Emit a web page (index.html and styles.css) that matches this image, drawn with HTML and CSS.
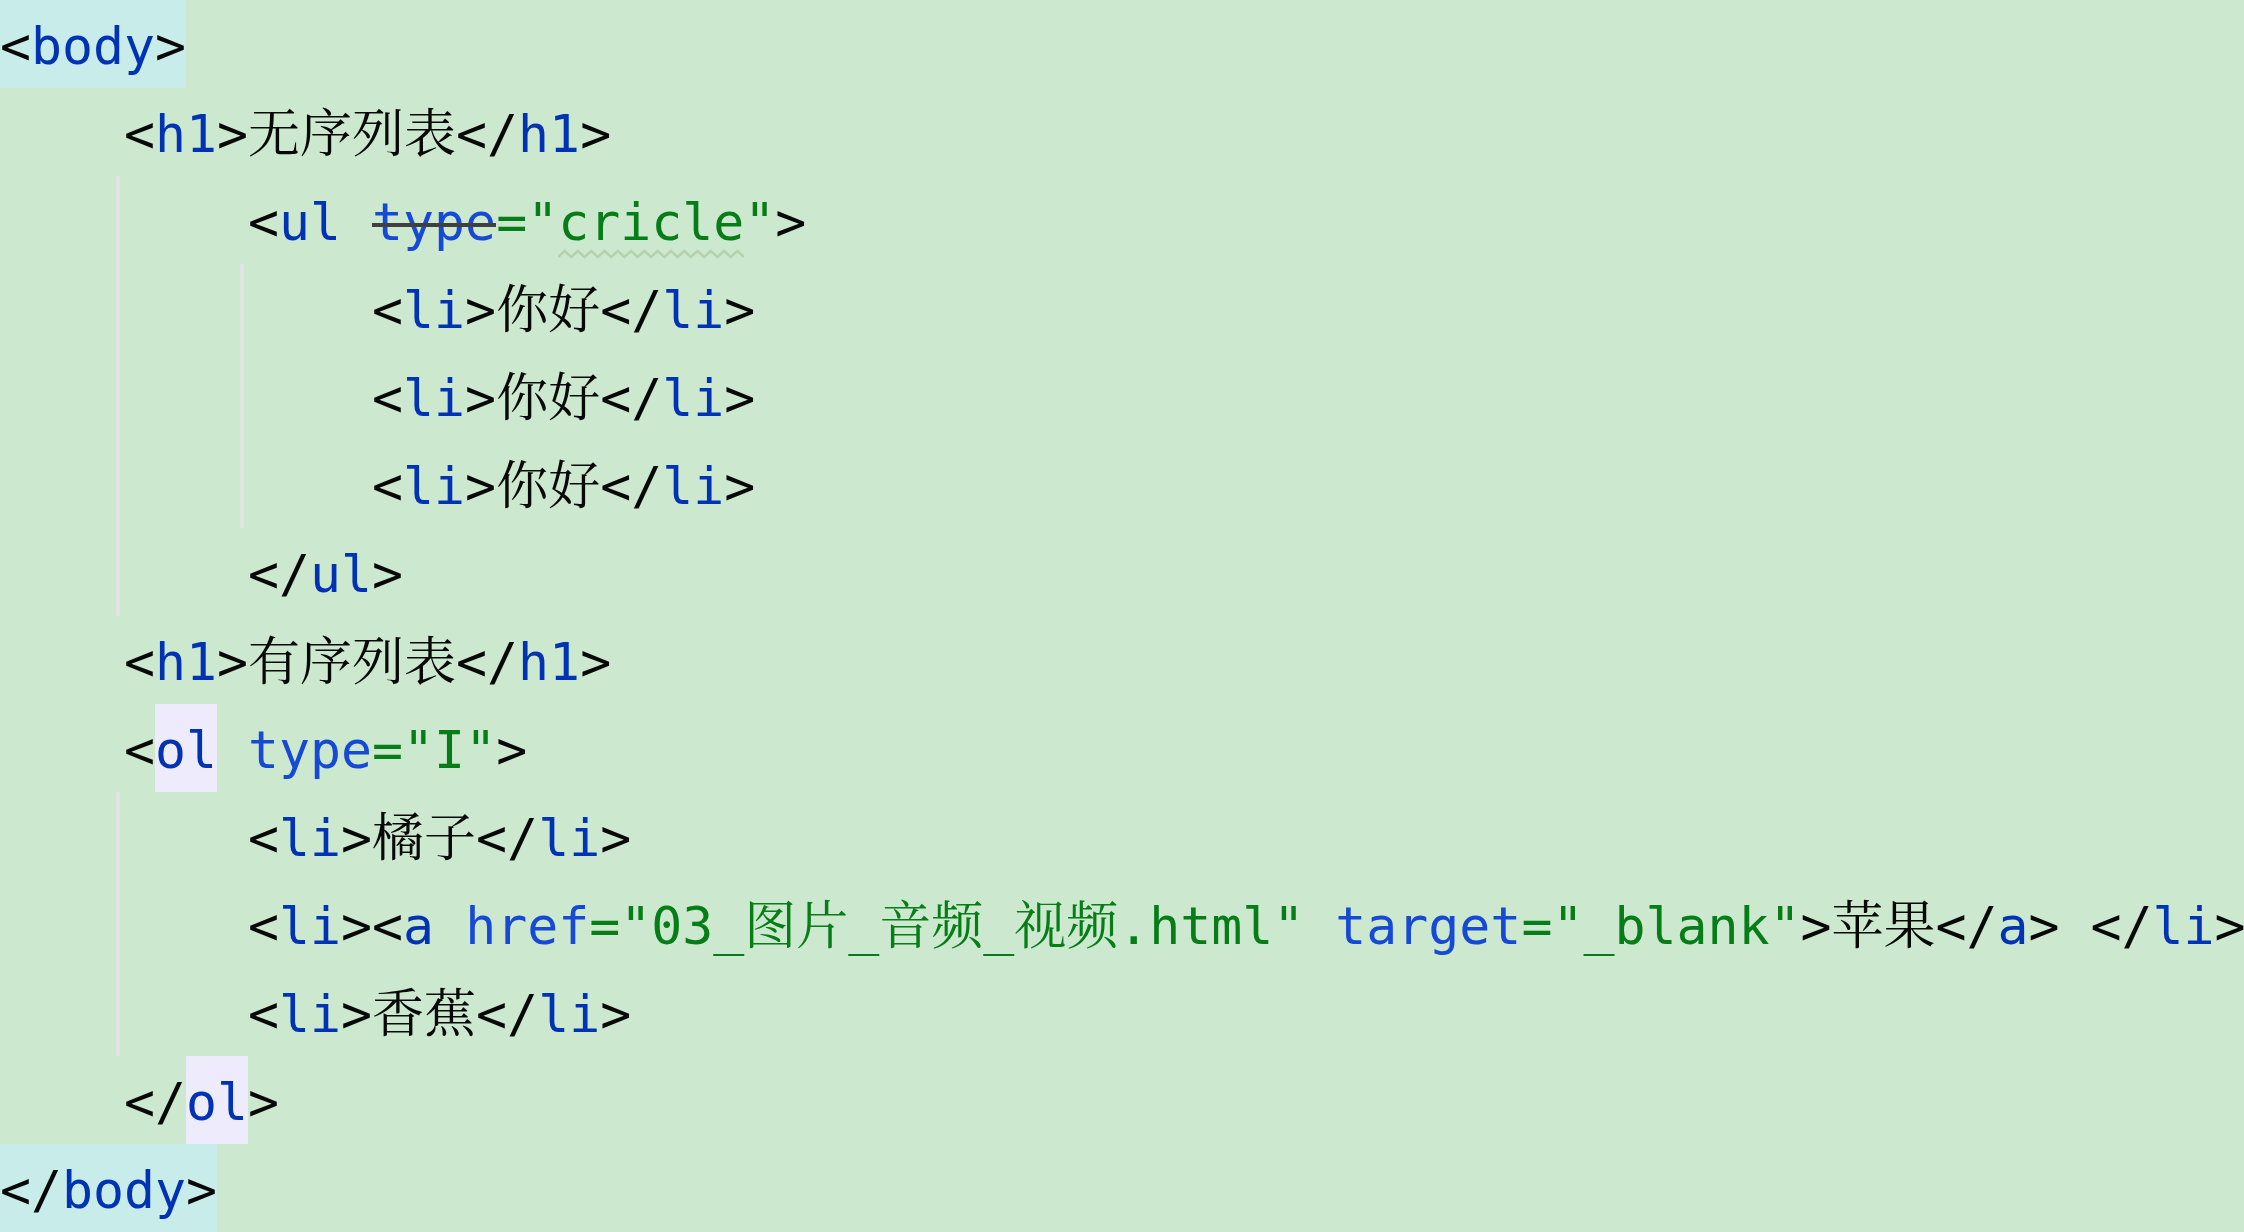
FILE: index.html
```html
<!DOCTYPE html>
<html lang="zh">
<head>
<meta charset="utf-8">
<title>code</title>
<link rel="stylesheet" href="styles.css">
</head>
<body>
<div class="editor">
<div class="ln"><span class="hl hl-tag"><span class="p">&lt;</span><span class="t">body</span><span class="p">&gt;</span></span></div>
<div class="ln">    <span class="p">&lt;</span><span class="t">h1</span><span class="p">&gt;</span><span class="cn">无序列表</span><span class="p">&lt;/</span><span class="t">h1</span><span class="p">&gt;</span></div>
<div class="fold">
<div class="ln">        <span class="p">&lt;</span><span class="t">ul</span> <span class="a strike">type</span><span class="v">="</span><span class="v typo">cricle<svg class="squiggle" viewBox="0 0 186 10" preserveAspectRatio="none"><polyline points="0,8 6.64,2 13.29,8 19.93,2 26.57,8 33.21,2 39.86,8 46.5,2 53.14,8 59.79,2 66.43,8 73.07,2 79.71,8 86.36,2 93,8 99.64,2 106.29,8 112.93,2 119.57,8 126.21,2 132.86,8 139.5,2 146.14,8 152.79,2 159.43,8 166.07,2 172.71,8 179.36,2 186,8" fill="none" stroke="#b3d3ad" stroke-width="2.6"/></svg></span><span class="v">"</span><span class="p">&gt;</span></div>
<div class="fold l2">
<div class="ln">            <span class="p">&lt;</span><span class="t">li</span><span class="p">&gt;</span><span class="cn">你好</span><span class="p">&lt;/</span><span class="t">li</span><span class="p">&gt;</span></div>
<div class="ln">            <span class="p">&lt;</span><span class="t">li</span><span class="p">&gt;</span><span class="cn">你好</span><span class="p">&lt;/</span><span class="t">li</span><span class="p">&gt;</span></div>
<div class="ln">            <span class="p">&lt;</span><span class="t">li</span><span class="p">&gt;</span><span class="cn">你好</span><span class="p">&lt;/</span><span class="t">li</span><span class="p">&gt;</span></div>
</div>
<div class="ln">        <span class="p">&lt;/</span><span class="t">ul</span><span class="p">&gt;</span></div>
</div>
<div class="ln">    <span class="p">&lt;</span><span class="t">h1</span><span class="p">&gt;</span><span class="cn">有序列表</span><span class="p">&lt;/</span><span class="t">h1</span><span class="p">&gt;</span></div>
<div class="ln">    <span class="p">&lt;</span><span class="hl hl-ref"><span class="t">ol</span></span> <span class="a">type</span><span class="v">="I"</span><span class="p">&gt;</span></div>
<div class="fold">
<div class="ln">        <span class="p">&lt;</span><span class="t">li</span><span class="p">&gt;</span><span class="cn">橘子</span><span class="p">&lt;/</span><span class="t">li</span><span class="p">&gt;</span></div>
<div class="ln">        <span class="p">&lt;</span><span class="t">li</span><span class="p">&gt;&lt;</span><span class="t">a</span> <span class="a">href</span><span class="v">="03_<span class="cn">图片</span>_<span class="cn">音频</span>_<span class="cn">视频</span>.html"</span> <span class="a">target</span><span class="v">="_blank"</span><span class="p">&gt;</span><span class="cn">苹果</span><span class="p">&lt;/</span><span class="t">a</span><span class="p">&gt; &lt;/</span><span class="t">li</span><span class="p">&gt;</span></div>
<div class="ln">        <span class="p">&lt;</span><span class="t">li</span><span class="p">&gt;</span><span class="cn">香蕉</span><span class="p">&lt;/</span><span class="t">li</span><span class="p">&gt;</span></div>
</div>
<div class="ln">    <span class="p">&lt;/</span><span class="hl hl-ref"><span class="t">ol</span></span><span class="p">&gt;</span></div>
<div class="ln"><span class="hl hl-tag"><span class="p">&lt;/</span><span class="t">body</span><span class="p">&gt;</span></span></div>
</div>
</body>
</html>
```

FILE: styles.css
```css
html, body {
  margin: 0;
  padding: 0;
  overflow: hidden;
  background: #cce8cf;
}

.editor {
  font-family: "DejaVu Sans Mono", "Noto Sans CJK SC", monospace;
  font-size: 51.5px;
  line-height: 92px;
  color: #080808;
}

.ln {
  height: 88px;
  white-space: pre;
}

.p { color: #080808; }
.t { color: #0033b3; }
.a { color: #174ad4; }
.v { color: #067d17; }

.cn {
  font-family: "Noto Serif CJK SC", "Noto Sans CJK SC", serif;
  font-size: 52px;
  line-height: 52px;
}

.hl {
  display: inline-block;
  height: 88px;
  vertical-align: top;
}
.hl-tag { background: #c8ecea; }
.hl-ref { background: #edebfc; }

.strike { position: relative; }
.strike::after {
  content: "";
  position: absolute;
  left: 0;
  right: 0;
  top: 31px;
  height: 4px;
  background: #404040;
}

.typo { position: relative; }
.squiggle {
  position: absolute;
  left: 0;
  top: 57px;
  width: 186px;
  height: 10px;
}

.fold { position: relative; }
.fold::before {
  content: "";
  position: absolute;
  top: 0;
  bottom: 0;
  left: 116px;
  width: 4px;
  background: #e2e4e2;
}
.fold.l2::before { left: 240px; }
```
